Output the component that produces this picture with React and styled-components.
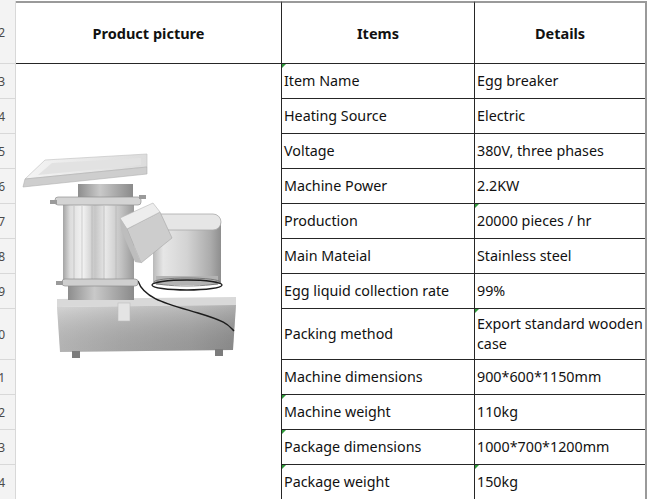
import React from "react";
import styled, { createGlobalStyle } from "styled-components";

const Global = createGlobalStyle`
  html, body { margin: 0; padding: 0; background: #fff; }
  body { font-family: "Noto Sans", "Open Sans", sans-serif; color: #111; }
`;

const LINE = "#262626";
const SOFT = "#d8d8d8";

const Sheet = styled.div`
  display: grid;
  grid-template-columns: 16px 266px 193px 170px 2px;
  grid-template-rows: 63px repeat(7, 35px) 51px repeat(4, 35px);
  width: 650px;
  padding-top: 1px;
  background: linear-gradient(to right, #f3f3f3 16px, #fff 16px);
`;

const RowHead = styled.div`
  grid-column: 1;
  display: flex;
  align-items: center;
  justify-content: flex-end;
  padding-right: 10px;
  overflow: hidden;
  white-space: nowrap;
  background: #f3f3f3;
  border-right: 1px solid ${SOFT};
  border-bottom: 1px solid ${SOFT};
  font-size: 12px;
  color: #4a4a4a;
`;

const HeadCell = styled.div`
  display: flex;
  align-items: center;
  justify-content: center;
  padding-bottom: 1px;
  border-top: 2px solid #9a9a9a;
  border-bottom: 1px solid ${LINE};
  border-right: ${(p) => (p.$last ? "none" : `1px solid ${LINE}`)};
  font-weight: 700;
  font-size: 14.5px;
`;

const PictureCell = styled.div`
  grid-column: 2;
  grid-row: 2 / span 12;
  border-right: 1px solid ${LINE};
  overflow: hidden;
`;

const Cell = styled.div`
  position: relative;
  display: flex;
  align-items: center;
  padding: 0 0 1px 2px;
  border-bottom: 1px solid ${LINE};
  border-right: ${(p) => (p.$value ? "none" : `1px solid ${LINE}`)};
  font-size: 14.3px;
  line-height: 20px;
`;

const Mark = styled.span`
  position: absolute;
  left: 0;
  top: 0;
  width: 0;
  height: 0;
  border-top: 4px solid #2f9a3a;
  border-right: 4px solid transparent;
`;

const EdgeRule = styled.div`
  grid-column: 5;
  grid-row: 1 / -1;
  background: #9a9a9a;
`;

const rows = [
  { label: "Item Name", value: "Egg breaker", ml: true },
  { label: "Heating Source", value: "Electric" },
  { label: "Voltage", value: "380V, three phases" },
  { label: "Machine Power", value: "2.2KW" },
  { label: "Production", value: "20000 pieces / hr", mv: true },
  { label: "Main Mateial", value: "Stainless steel" },
  { label: "Egg liquid collection rate", value: "99%" },
  { label: "Packing method", value: "Export standard wooden case", mv: true },
  { label: "Machine dimensions", value: "900*600*1150mm" },
  { label: "Machine weight", value: "110kg", ml: true },
  { label: "Package dimensions", value: "1000*700*1200mm", ml: true },
  { label: "Package weight", value: "150kg", ml: true, mv: true },
];

function Machine() {
  return (
    <svg width="265" height="310" viewBox="16 64 265 310" style={{ display: "block" }}>
      <defs>
        <linearGradient id="gBase" x1="0" x2="1" y1="0" y2="0">
          <stop offset="0" stopColor="#c8c8c8" />
          <stop offset="0.35" stopColor="#b6b6b6" />
          <stop offset="0.75" stopColor="#a8a8a8" />
          <stop offset="1" stopColor="#969696" />
        </linearGradient>
        <linearGradient id="gBaseV" x1="0" x2="0" y1="0" y2="1">
          <stop offset="0" stopColor="#fff" stopOpacity="0.25" />
          <stop offset="1" stopColor="#000" stopOpacity="0.1" />
        </linearGradient>
        <linearGradient id="gCyl" x1="0" x2="1" y1="0" y2="0">
          <stop offset="0" stopColor="#a4a4a4" />
          <stop offset="0.1" stopColor="#dcdcdc" />
          <stop offset="0.28" stopColor="#f2f2f2" />
          <stop offset="0.45" stopColor="#c6c6c6" />
          <stop offset="0.6" stopColor="#e8e8e8" />
          <stop offset="0.82" stopColor="#c2c2c2" />
          <stop offset="1" stopColor="#9a9a9a" />
        </linearGradient>
        <linearGradient id="gNeck" x1="0" x2="1" y1="0" y2="0">
          <stop offset="0" stopColor="#8d8d8d" />
          <stop offset="0.4" stopColor="#c9c9c9" />
          <stop offset="1" stopColor="#8a8a8a" />
        </linearGradient>
        <linearGradient id="gTank" x1="0" x2="1" y1="0" y2="0">
          <stop offset="0" stopColor="#b9b9b9" />
          <stop offset="0.15" stopColor="#e6e6e6" />
          <stop offset="0.5" stopColor="#d3d3d3" />
          <stop offset="0.85" stopColor="#ababab" />
          <stop offset="1" stopColor="#8e8e8e" />
        </linearGradient>
        <linearGradient id="gTray" x1="0" x2="1" y1="0" y2="0">
          <stop offset="0" stopColor="#f4f4f4" />
          <stop offset="1" stopColor="#dcdcdc" />
        </linearGradient>
      </defs>

      {/* base */}
      <polygon points="57,299 236,297 236,305 57,307" fill="#d9d9d9" />
      <polygon points="57,307 236,305 233,350 60,352" fill="url(#gBase)" />
      <polygon points="57,307 236,305 233,350 60,352" fill="url(#gBaseV)" />
      <rect x="72" y="351" width="8" height="7" fill="#7c7c7c" />
      <rect x="215" y="349" width="8" height="7" fill="#7c7c7c" />
      <rect x="118" y="303" width="12" height="18" fill="#e4e4e4" stroke="#bdbdbd" strokeWidth="0.6" />

      {/* cable */}
      <path d="M138,281 C144,299 168,304 198,313 S228,325 234,331" stroke="#1c1c1c" strokeWidth="1.4" fill="none" />

      {/* tank */}
      <rect x="153" y="222" width="68" height="62" fill="url(#gTank)" />
      <rect x="153" y="214" width="68" height="16" rx="8" fill="#e6e6e6" stroke="#a9a9a9" strokeWidth="0.8" />
      <rect x="156" y="276" width="62" height="9" fill="#b3b3b3" />
      <ellipse cx="187" cy="285" rx="35" ry="5" fill="none" stroke="#1e1e1e" strokeWidth="1.4" />
      <ellipse cx="187" cy="282" rx="33" ry="4" fill="none" stroke="#6a6a6a" strokeWidth="0.8" />

      {/* left cylinder */}
      <rect x="68" y="284" width="66" height="16" fill="url(#gNeck)" />
      <rect x="63" y="200" width="71" height="82" fill="url(#gCyl)" />
      <g stroke="#a9a9a9" strokeWidth="0.7" opacity="0.7">
        <line x1="74" y1="206" x2="74" y2="280" />
        <line x1="82" y1="206" x2="82" y2="280" />
        <line x1="92" y1="206" x2="92" y2="280" />
        <line x1="104" y1="206" x2="104" y2="280" />
        <line x1="116" y1="206" x2="116" y2="280" />
      </g>
      <rect x="62" y="279" width="76" height="7" rx="3" fill="#cfcfcf" stroke="#8d8d8d" strokeWidth="0.7" />
      <rect x="56" y="281" width="7" height="4" fill="#9a9a9a" />
      <rect x="78" y="184" width="55" height="16" fill="url(#gNeck)" />
      <rect x="55" y="197" width="86" height="8" rx="3" fill="#d4d4d4" stroke="#8f8f8f" strokeWidth="0.7" />
      <rect x="50" y="200" width="7" height="4" fill="#9a9a9a" />
      <rect x="139" y="195" width="7" height="4" fill="#9a9a9a" />

      {/* chute */}
      <polygon points="127,229 160,212 172,238 141,263" fill="#cdcdcd" stroke="#a6a6a6" strokeWidth="0.6" />
      <polygon points="120,218 153,203 160,212 127,229" fill="#ededed" stroke="#b5b5b5" strokeWidth="0.6" />
      <polygon points="120,218 127,229 141,263 135,262 121,230" fill="#bdbdbd" />

      {/* tray */}
      <polygon points="45,160 147,154 147,167 25,179" fill="url(#gTray)" stroke="#c6c6c6" strokeWidth="0.7" />
      <polygon points="52,163 141,158 141,165 38,175" fill="#e2e2e2" />
      <polygon points="25,179 147,167 147,174 23,187" fill="#cecece" stroke="#b0b0b0" strokeWidth="0.6" />
    </svg>
  );
}

export default function App() {
  return (
    <>
      <Global />
      <Sheet>
        <RowHead>2</RowHead>
        <HeadCell>Product picture</HeadCell>
        <HeadCell>Items</HeadCell>
        <HeadCell $last>Details</HeadCell>
        <EdgeRule />
        <PictureCell>
          <Machine />
        </PictureCell>
        {rows.map((r, i) => (
          <React.Fragment key={r.label}>
            <RowHead style={{ gridRow: i + 2 }}>{i + 3}</RowHead>
            <Cell style={{ gridRow: i + 2, gridColumn: 3 }}>
              {r.ml && <Mark />}
              {r.label}
            </Cell>
            <Cell $value style={{ gridRow: i + 2, gridColumn: 4 }}>
              {r.mv && <Mark />}
              {r.value}
            </Cell>
          </React.Fragment>
        ))}
      </Sheet>
    </>
  );
}
